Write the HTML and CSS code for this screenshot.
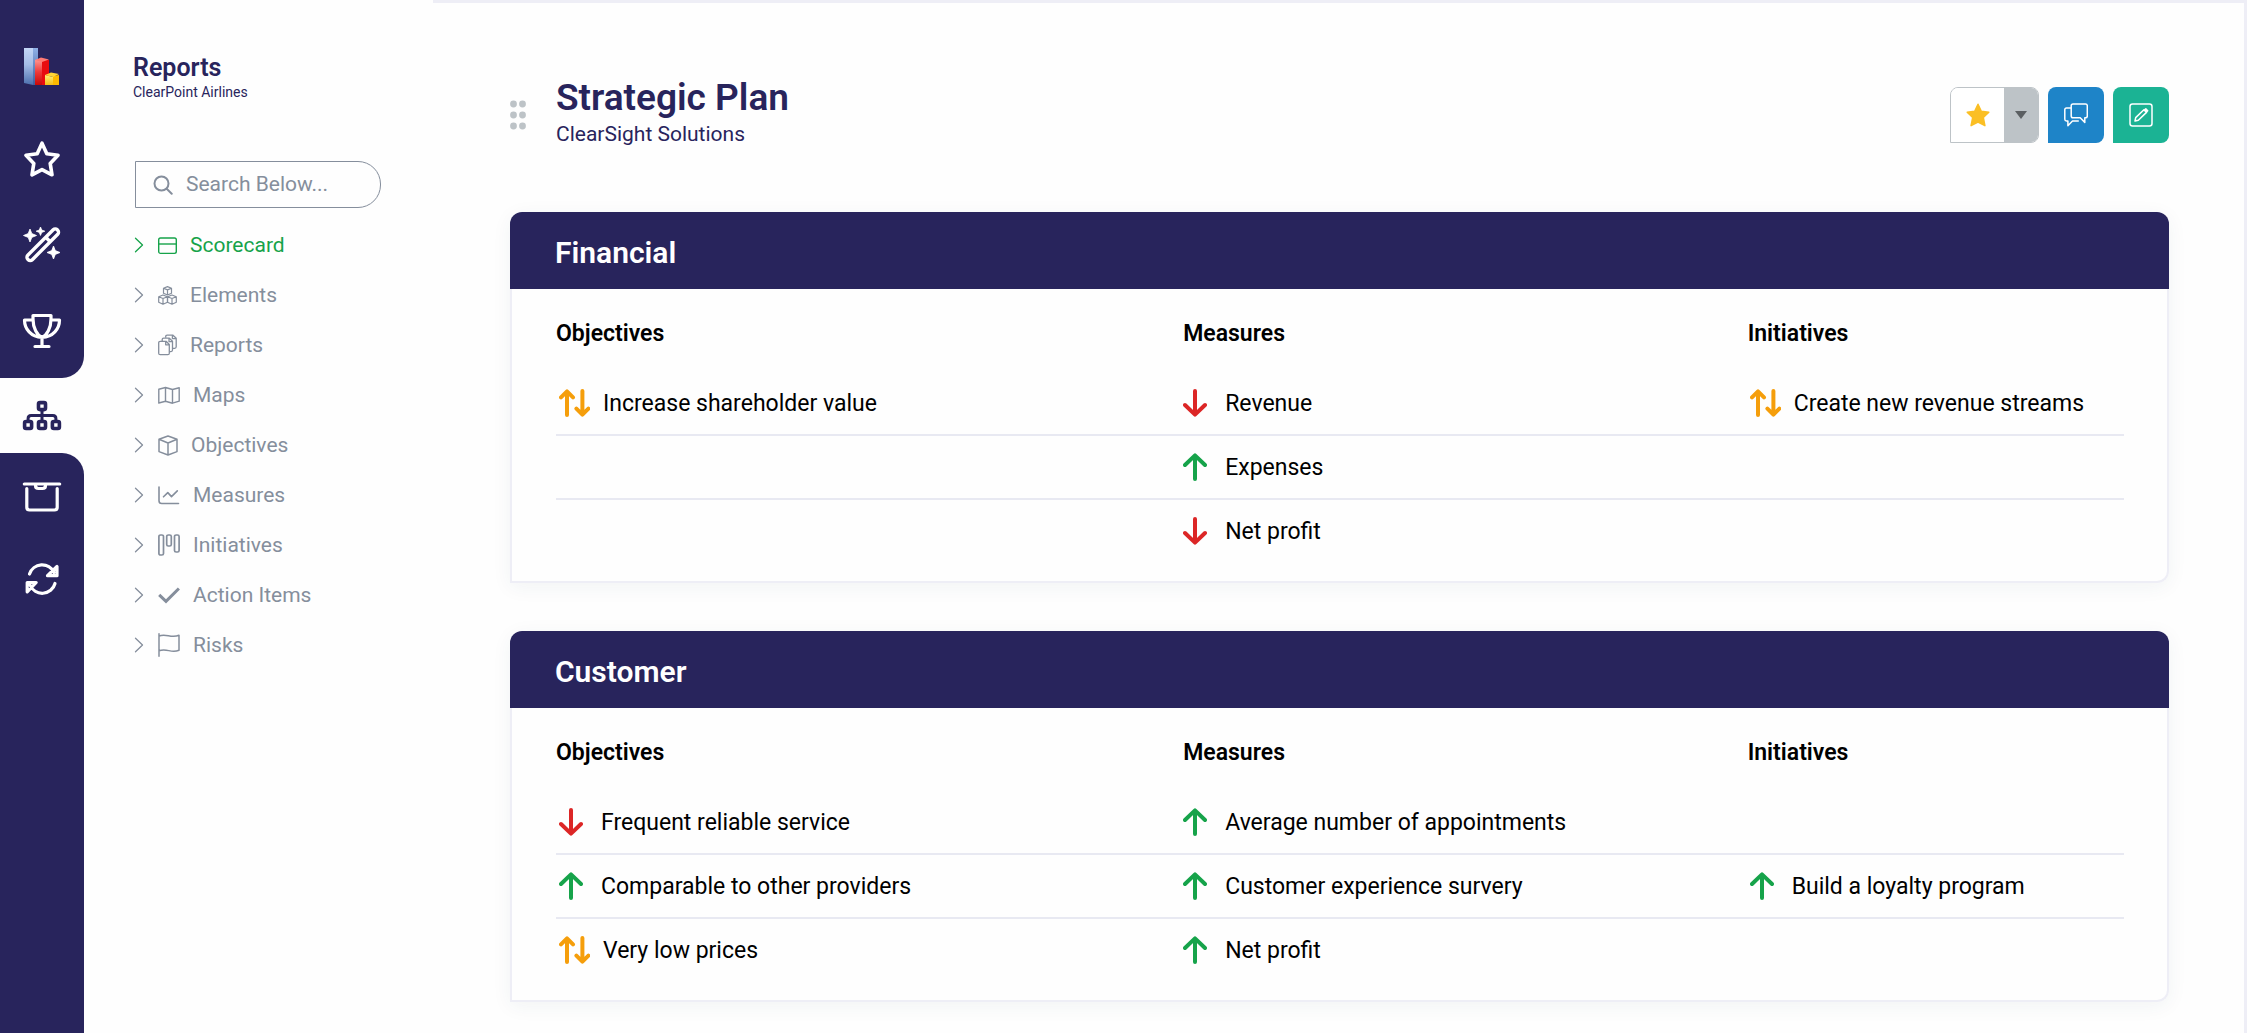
FILE: index.html
```html
<!DOCTYPE html>
<html lang="en">
<head>
    <meta charset="UTF-8">
    <meta name="viewport" content="width=device-width, initial-scale=1.0">
    <title>Strategic Plan - ClearPoint Airlines</title>
    <link rel="stylesheet" href="styles.css">
</head>
<body>
    <!-- Shared icons -->
    <svg class="icon-defs" width="0" height="0" aria-hidden="true">
        <symbol id="chevron" viewBox="0 0 9 16">
            <path d="M1 1.2L8 8l-7 6.8" fill="none" stroke="currentColor" stroke-width="1.3" stroke-linecap="round" stroke-linejoin="round"/>
        </symbol>
        <symbol id="arrow-up" viewBox="0 0 24 28">
            <path d="M12 26V3M2 12L12 2.4 22 12" fill="none" stroke="currentColor" stroke-width="4" stroke-linecap="round" stroke-linejoin="round"/>
        </symbol>
        <symbol id="arrow-down" viewBox="0 0 24 28">
            <path d="M12 2v23M2 16l10 9.6L22 16" fill="none" stroke="currentColor" stroke-width="4" stroke-linecap="round" stroke-linejoin="round"/>
        </symbol>
        <symbol id="arrow-both" viewBox="0 0 31 28">
            <path d="M8 26V3M2 8.4l6-6 6 6M23.400 2v23M17.400 19.600l6 6 6-6" fill="none" stroke="currentColor" stroke-width="4" stroke-linecap="round" stroke-linejoin="round"/>
        </symbol>
    </svg>

    <div class="app">
        <nav class="rail" aria-label="Main">
            <div class="rail-group rail-top">
                <a class="rail-logo" href="#" aria-label="Home">
                    <svg width="38" height="38" viewBox="0 0 38 38">
                        <defs>
                            <linearGradient id="blueFront" x1="0" y1="0" x2="0" y2="1">
                                <stop offset="0" stop-color="#c4d7f6"/>
                                <stop offset="0.450" stop-color="#a5bde6"/>
                                <stop offset="1" stop-color="#4c6fae"/>
                            </linearGradient>
                            <linearGradient id="blueSide" x1="0" y1="0" x2="0" y2="1">
                                <stop offset="0" stop-color="#8fb0e6"/>
                                <stop offset="1" stop-color="#3f5f9f"/>
                            </linearGradient>
                            <linearGradient id="redFront" x1="0" y1="0" x2="0" y2="1">
                                <stop offset="0" stop-color="#ff9a96"/>
                                <stop offset="0.500" stop-color="#ee3a3a"/>
                                <stop offset="1" stop-color="#c80808"/>
                            </linearGradient>
                            <linearGradient id="yellowFront" x1="0" y1="0" x2="0" y2="1">
                                <stop offset="0" stop-color="#fff27a"/>
                                <stop offset="1" stop-color="#f5bd14"/>
                            </linearGradient>
                        </defs>
                        <path d="M1 0h9v37l-9-2z" fill="url(#blueFront)"/>
                        <path d="M10 0h5v37h-5z" fill="url(#blueSide)"/>
                        <path d="M12 12l6-1 2 0v26h-8z" fill="url(#redFront)"/>
                        <path d="M19 12h7v25h-7z" fill="#e80c10"/>
                        <path d="M12 12l6-2.500 8 2-7 2.500z" fill="#ff7a74"/>
                        <path d="M22 27l8 2v8h-8z" fill="url(#yellowFront)"/>
                        <path d="M30 28l6-1v10h-6z" fill="#fdb900"/>
                        <path d="M22 27l6-2.500 8 1.500-6 3z" fill="#ffd535"/>
                    </svg>
                </a>
                <a href="#" aria-label="Favorites">
                    <svg width="40" height="36" viewBox="0 0 40 36" fill="none" stroke="currentColor" stroke-width="3.600" stroke-linejoin="round">
                        <path d="M20 2.200l4.800 10.600 11.200 1.400-7.800 8.200 1.800 11.400-10-5.200-10 5.200 1.800-11.400L4 14.200l11.200-1.400z"/>
                    </svg>
                </a>
                <a href="#" aria-label="Automations">
                    <svg width="40" height="36" viewBox="0 0 40 36">
                        <path d="M5.800 28.200L31.200 2.800a2.900 2.900 0 0 1 4.100 0l.4.400a2.900 2.900 0 0 1 0 4.100L10.300 32.700a2.900 2.900 0 0 1-4.100 0l-.4-.4a2.900 2.900 0 0 1 0-4.100zM24 10.500l4.500 4.500" fill="none" stroke="currentColor" stroke-width="3.400"/>
                        <path d="M8 2l1.800 4.600L14.500 8.500 9.800 10.400 8 15l-1.800-4.600L1.500 8.500l4.700-1.900zM18.500 0l1.200 3 3.100 1.200-3.100 1.200-1.200 3-1.200-3-3.100-1.200 3.100-1.200zM31.500 19l1.800 4.600 4.700 1.900-4.700 1.900-1.800 4.600-1.800-4.600-4.700-1.900 4.700-1.900z" fill="currentColor" stroke="currentColor" stroke-width="0.800"/>
                    </svg>
                </a>
                <a href="#" aria-label="Goals">
                    <svg width="40" height="36" viewBox="0 0 40 36" fill="none" stroke="currentColor" stroke-width="3.200" stroke-linecap="round" stroke-linejoin="round">
                        <path d="M11 2.500h18v3.500c0 9-4 16-9 18.500C15 22 11 15 11 6zM20 24.500v8.500M13 33.500h14M11 7H2.500c0 9 6.500 17 17.500 17.500M29 7h8.500c0 9-6.500 17-17.500 17.500"/>
                    </svg>
                </a>
            </div>

            <a class="rail-active" href="#" aria-label="Scorecard structure" aria-current="page">
                <svg width="40" height="32" viewBox="0 0 40 32" fill="none" stroke="currentColor" stroke-width="3.600" stroke-linejoin="round">
                    <rect x="16.500" y="2.600" width="7" height="7" rx="1.500"/>
                    <rect x="2.600" y="21.500" width="7" height="7" rx="1.500"/>
                    <rect x="16.500" y="21.500" width="7" height="7" rx="1.500"/>
                    <rect x="30.400" y="21.500" width="7" height="7" rx="1.500"/>
                    <path d="M20 10v11M6.100 21v-2.500q0-3 3-3h21.800q3 0 3 3V21" stroke-width="3"/>
                </svg>
            </a>

            <div class="rail-group rail-bottom">
                <a href="#" aria-label="Library">
                    <svg width="40" height="36" viewBox="0 0 40 36" fill="none" stroke="currentColor" stroke-width="3.200" stroke-linecap="round" stroke-linejoin="round">
                        <path d="M2.300 5h35.400M4.800 9.500V28.300q0 2.700 2.700 2.700h25q2.700 0 2.700-2.700V9.500M13.500 5v1.500q0 3 3 3h4q3 0 3-3V5"/>
                    </svg>
                </a>
                <a href="#" aria-label="Sync">
                    <svg width="40" height="36" viewBox="0 0 40 36" fill="none" stroke="currentColor" stroke-width="3.200" stroke-linecap="round" stroke-linejoin="round">
                        <path d="M7.500 13A13.200 13.200 0 0 1 32 11.500M35 5.500v9.200h-9.500zM33 22.500A13.200 13.200 0 0 1 8 24M5.200 30.800v-9.300h9z"/>
                    </svg>
                </a>
            </div>
        </nav>

        <aside class="sidebar">
            <h2 class="sidebar-title">Reports</h2>
            <p class="sidebar-subtitle">ClearPoint Airlines</p>

            <label class="search">
                <svg width="20" height="20" viewBox="0 0 20 20" fill="none" stroke="currentColor" stroke-width="2" stroke-linecap="round">
                    <circle cx="8.500" cy="8.500" r="7"/>
                    <path d="M13.700 13.700l5 5"/>
                </svg>
                <input type="search" placeholder="Search Below..." aria-label="Search reports">
            </label>

            <ul class="tree">
                <li>
                    <a class="selected" href="#">
                        <svg class="chevron"><use href="#chevron"/></svg>
                        <svg width="19" height="24" viewBox="0 0 19 24" fill="none" stroke="currentColor" stroke-width="1.400">
                            <rect x="0.700" y="5" width="17.600" height="15.400" rx="1.800"/>
                            <path d="M.7 11h17.600"/>
                        </svg>
                        <span>Scorecard</span>
                    </a>
                </li>
                <li>
                    <a href="#">
                        <svg class="chevron"><use href="#chevron"/></svg>
                        <svg width="19" height="24" viewBox="0 0 19 24" fill="none" stroke="currentColor" stroke-width="1.200" stroke-linejoin="round">
                            <path d="M9.500 3.600l4 1.600v5L9.500 12l-4-1.800v-5zM5.500 5.200l4 1.700 4-1.700M9.500 6.900V12"/>
                            <path d="M5 12l4.500 1.700v5.500L5 21.200.7 19.200v-5.500zM.7 13.700L5 15.500l4.500-1.800M5 15.500v5.700"/>
                            <path d="M14 12l4.300 1.700v5.500L14 21.200l-4.500-2v-5.500zM9.500 13.700l4.500 1.800 4.300-1.800M14 15.500v5.700"/>
                        </svg>
                        <span>Elements</span>
                    </a>
                </li>
                <li>
                    <a href="#">
                        <svg class="chevron"><use href="#chevron"/></svg>
                        <svg width="19" height="24" viewBox="0 0 19 24" fill="none" stroke="currentColor" stroke-width="1.300" stroke-linejoin="round">
                            <path d="M4.200 8.300H2.200q-1.500 0-1.500 1.500v10.400q0 1.500 1.500 1.500h7.600q1.500 0 1.500-1.500V11.500L8.100 8.300zM7.700 8.500v3.300h3.400"/>
                            <path d="M4.200 8V6.600q0-1.500 1.500-1.500h5.600l3.200 3.200v8.800q0 1.500-1.500 1.500h-1.500M11 5.300v3.300h3.300"/>
                            <path d="M7.700 4.800V3.600q0-1.500 1.500-1.500h5.500l3.500 3.200v8.500q0 1.500-1.500 1.500h-2M14.400 2.300v3.300h3.500"/>
                        </svg>
                        <span>Reports</span>
                    </a>
                </li>
                <li>
                    <a href="#">
                        <svg class="chevron"><use href="#chevron"/></svg>
                        <svg width="22" height="24" viewBox="0 0 22 24" fill="none" stroke="currentColor" stroke-width="1.400" stroke-linejoin="round">
                            <path d="M.8 6.200l6.700-1.700 7 2 6.700-1.800v13.500l-6.700 2-7-1.900-6.700 1.700zM7.500 4.500v13.800M14.500 6.500v13.700"/>
                        </svg>
                        <span>Maps</span>
                    </a>
                </li>
                <li>
                    <a href="#">
                        <svg class="chevron"><use href="#chevron"/></svg>
                        <svg width="20" height="24" viewBox="0 0 20 24" fill="none" stroke="currentColor" stroke-width="1.500" stroke-linejoin="round">
                            <path d="M10 3l9 3.300v12.300L10 22l-9-3.400V6.300zM1 6.300l9 3.700 9-3.700M10 10v12"/>
                        </svg>
                        <span>Objectives</span>
                    </a>
                </li>
                <li>
                    <a href="#">
                        <svg class="chevron"><use href="#chevron"/></svg>
                        <svg width="22" height="24" viewBox="0 0 22 24" fill="none" stroke="currentColor" stroke-width="1.600" stroke-linecap="round" stroke-linejoin="round">
                            <path d="M1 4v13.800q0 2.700 2.700 2.700h16.800M5.500 13.800l4.300-4.200 3.700 4 5.800-5.700"/>
                        </svg>
                        <span>Measures</span>
                    </a>
                </li>
                <li>
                    <a href="#">
                        <svg class="chevron"><use href="#chevron"/></svg>
                        <svg width="22" height="24" viewBox="0 0 22 24" fill="none" stroke="currentColor" stroke-width="1.700">
                            <rect x="0.900" y="2" width="4.600" height="20" rx="1.600"/>
                            <rect x="8.700" y="2" width="4.600" height="11" rx="1.600"/>
                            <rect x="16.500" y="2" width="4.600" height="17" rx="1.600"/>
                        </svg>
                        <span>Initiatives</span>
                    </a>
                </li>
                <li>
                    <a href="#">
                        <svg class="chevron"><use href="#chevron"/></svg>
                        <svg width="22" height="24" viewBox="0 0 22 24" fill="none" stroke="currentColor" stroke-width="3">
                            <path d="M1.200 11.800l6.800 6.600L20.900 5.500"/>
                        </svg>
                        <span>Action Items</span>
                    </a>
                </li>
                <li>
                    <a href="#">
                        <svg class="chevron"><use href="#chevron"/></svg>
                        <svg width="22" height="24" viewBox="0 0 22 24" fill="none" stroke="currentColor" stroke-width="1.500" stroke-linecap="round" stroke-linejoin="round">
                            <path d="M1 .8v22.400M1 3c7-3 12 2.500 20-.8v15c-8 3.500-12-2.500-20 .6"/>
                        </svg>
                        <span>Risks</span>
                    </a>
                </li>
            </ul>
        </aside>

        <main class="content">
            <header class="page-header">
                <svg class="drag-handle" width="16" height="30" viewBox="0 0 16 30" fill="#bdc3c7">
                    <circle cx="3.500" cy="4" r="3.400"/><circle cx="12.500" cy="4" r="3.400"/>
                    <circle cx="3.500" cy="15" r="3.400"/><circle cx="12.500" cy="15" r="3.400"/>
                    <circle cx="3.500" cy="26" r="3.400"/><circle cx="12.500" cy="26" r="3.400"/>
                </svg>
                <div class="page-heading">
                    <h1>Strategic Plan</h1>
                    <p>ClearSight Solutions</p>
                </div>
                <div class="actions">
                    <div class="split-button">
                        <button class="star" type="button" aria-label="Favorite">
                            <svg width="24" height="24" viewBox="0 0 24 24">
                                <path d="M12 1.300l3.300 6.900 7.500 1-5.500 5.300 1.600 8.200-6.900-3.600-6.900 3.600 1.600-8.200L1.200 9.200l7.500-1z" fill="#fbbf24" stroke="#fbbf24" stroke-width="1.500" stroke-linejoin="round"/>
                            </svg>
                        </button>
                        <button class="caret" type="button" aria-label="More options">
                            <svg width="12" height="8" viewBox="0 0 12 8"><path d="M0 0h12L6 8z" fill="#5b5f62"/></svg>
                        </button>
                    </div>
                    <button class="action discuss" type="button" aria-label="Discussion">
                        <svg width="24" height="24" viewBox="0 0 24 24" fill="none" stroke="#fff" stroke-width="1.500" stroke-linejoin="round">
                            <path d="M9 1h12.500q1.800 0 1.800 1.800V13q0 1.800-1.800 1.800h-.7v4.600l-4.600-4.600H9q-1.800 0-1.800-1.800V2.800Q7.200 1 9 1z"/>
                            <path d="M7.200 5H2.500Q.8 5 .8 6.700v9.600q0 1.700 1.700 1.700h1.400v4.800L8.500 18h6.300"/>
                        </svg>
                    </button>
                    <button class="action edit" type="button" aria-label="Edit">
                        <svg width="24" height="24" viewBox="0 0 24 24" fill="none" stroke="#fff" stroke-width="1.500" stroke-linejoin="round">
                            <rect x="1" y="1" width="22" height="22" rx="2.500"/>
                            <path d="M6 18l.7-3.400 8.200-7.800 2.600 2.600-8.200 7.900z"/>
                            <path d="M15.800 6.500l1-.7 1.900 1.900-1 1z" fill="#fff"/>
                        </svg>
                    </button>
                </div>
            </header>

            <section class="card">
                <h2 class="card-title">Financial</h2>
                <div class="card-body">
                    <table>
                        <thead>
                            <tr><th scope="col">Objectives</th><th scope="col">Measures</th><th scope="col">Initiatives</th></tr>
                        </thead>
                        <tbody>
                            <tr>
                                <td><div class="item mixed"><svg><use href="#arrow-both"/></svg><span>Increase shareholder value</span></div></td>
                                <td><div class="item down"><svg><use href="#arrow-down"/></svg><span>Revenue</span></div></td>
                                <td><div class="item mixed"><svg><use href="#arrow-both"/></svg><span>Create new revenue streams</span></div></td>
                            </tr>
                            <tr>
                                <td></td>
                                <td><div class="item up"><svg><use href="#arrow-up"/></svg><span>Expenses</span></div></td>
                                <td></td>
                            </tr>
                            <tr>
                                <td></td>
                                <td><div class="item down"><svg><use href="#arrow-down"/></svg><span>Net profit</span></div></td>
                                <td></td>
                            </tr>
                        </tbody>
                    </table>
                </div>
            </section>

            <section class="card">
                <h2 class="card-title">Customer</h2>
                <div class="card-body">
                    <table>
                        <thead>
                            <tr><th scope="col">Objectives</th><th scope="col">Measures</th><th scope="col">Initiatives</th></tr>
                        </thead>
                        <tbody>
                            <tr>
                                <td><div class="item down"><svg><use href="#arrow-down"/></svg><span>Frequent reliable service</span></div></td>
                                <td><div class="item up"><svg><use href="#arrow-up"/></svg><span>Average number of appointments</span></div></td>
                                <td></td>
                            </tr>
                            <tr>
                                <td><div class="item up"><svg><use href="#arrow-up"/></svg><span>Comparable to other providers</span></div></td>
                                <td><div class="item up"><svg><use href="#arrow-up"/></svg><span>Customer experience survery</span></div></td>
                                <td><div class="item up"><svg><use href="#arrow-up"/></svg><span>Build a loyalty program</span></div></td>
                            </tr>
                            <tr>
                                <td><div class="item mixed"><svg><use href="#arrow-both"/></svg><span>Very low prices</span></div></td>
                                <td><div class="item up"><svg><use href="#arrow-up"/></svg><span>Net profit</span></div></td>
                                <td></td>
                            </tr>
                        </tbody>
                    </table>
                </div>
            </section>
        </main>
    </div>
</body>
</html>
```
FILE: styles.css
```css
:root {
    --navy: #28245c;
    --gray: #858e9c;
    --line: #eeeef6;
    --green: #16a34a;
}

* {
    box-sizing: border-box;
}

body {
    margin: 0;
    background: #fefefe;
    font-family: Roboto, "Liberation Sans", sans-serif;
    color: #000;
}

h1, h2, p, ul {
    margin: 0;
    padding: 0;
}

a {
    color: inherit;
    text-decoration: none;
}

button {
    padding: 0;
    border: 0;
    font: inherit;
    cursor: pointer;
}

svg {
    display: block;
    flex-shrink: 0;
}

.icon-defs {
    position: absolute;
}

.app {
    display: flex;
    min-height: 100vh;
}

/* Icon rail */
.rail {
    display: flex;
    flex-direction: column;
    width: 84px;
    flex-shrink: 0;
}

.rail-group {
    display: flex;
    flex-direction: column;
    align-items: center;
    background: var(--navy);
    color: #fff;
}

.rail-top {
    gap: 50px;
    padding: 48px 0 29px;
    border-bottom-right-radius: 22px;
}

.rail-logo {
    margin-bottom: 5px;
}

.rail-active {
    display: flex;
    align-items: center;
    justify-content: center;
    height: 75px;
    color: var(--navy);
}

.rail-bottom {
    flex: 1;
    gap: 46px;
    padding-top: 26px;
    border-top-right-radius: 22px;
}

/* Sidebar */
.sidebar {
    width: 349px;
    flex-shrink: 0;
    padding: 52px 52px 0 49px;
}

.sidebar-title {
    font-size: 25px;
    font-weight: 600;
    line-height: 32px;
    color: var(--navy);
}

.sidebar-subtitle {
    font-size: 14px;
    line-height: 16px;
    color: var(--navy);
}

.search {
    display: flex;
    align-items: center;
    gap: 13px;
    height: 47px;
    margin: 61px 0 12px 2px;
    padding: 0 17px;
    border: 1px solid var(--gray);
    border-radius: 0 23px 23px 0;
    color: var(--gray);
}

.search input {
    width: 100%;
    min-width: 0;
    padding: 0 0 2px;
    border: 0;
    outline: 0;
    background: none;
    font: 21px/24px Roboto, "Liberation Sans", sans-serif;
    color: inherit;
}

.search input::placeholder {
    color: var(--gray);
    opacity: 1;
}

.tree {
    list-style: none;
    color: var(--gray);
}

.tree a {
    display: flex;
    align-items: center;
    gap: 13px;
    height: 50px;
    font-size: 21px;
    line-height: 24px;
}

.tree .selected {
    color: var(--green);
}

.tree .chevron {
    width: 12px;
    height: 16px;
}

/* Main area */
.content {
    flex: 1;
    min-width: 0;
    padding: 72px 75px 32px 77px;
    border-top: 3px solid var(--line);
    border-right: 3px solid var(--line);
}

.page-header {
    display: flex;
    align-items: center;
    gap: 30px;
    height: 80px;
    margin-bottom: 57px;
}

.page-heading {
    flex: 1;
    padding-bottom: 6px;
    color: var(--navy);
}

.page-heading h1 {
    font-size: 37px;
    font-weight: 600;
    line-height: 44px;
}

.page-heading p {
    font-size: 21px;
    line-height: 28px;
}

.actions {
    display: flex;
    gap: 9px;
}

.split-button {
    display: flex;
    width: 89px;
    height: 56px;
    border: 1px solid #bdc3c7;
    border-radius: 8px 8px 8px 0;
    overflow: hidden;
}

.split-button button {
    display: flex;
    align-items: center;
    justify-content: center;
}

.star {
    flex: 1;
    background: #fff;
}

.caret {
    width: 34px;
    background: #bdc3c7;
}

.action {
    display: flex;
    align-items: center;
    justify-content: center;
    width: 56px;
    height: 56px;
    border-radius: 8px 8px 8px 0;
}

.discuss {
    background: #1e84c8;
}

.edit {
    background: #1bb394;
}

/* Perspective cards */
.card {
    border-radius: 12px 12px 12px 0;
    box-shadow: 0 4px 20px rgba(40, 60, 92, 0.06);
}

.card + .card {
    margin-top: 48px;
}

.card-title {
    padding: 21px 45px 16px;
    border-radius: 12px 12px 0 0;
    background: var(--navy);
    color: #fff;
    font-size: 30px;
    font-weight: 600;
    line-height: 40px;
}

.card-body {
    padding: 0 43px 19px 44px;
    border: 2px solid var(--line);
    border-top: 0;
    border-radius: 0 0 12px 0;
    background: #fefefe;
}

table {
    width: 100%;
    table-layout: fixed;
    border-collapse: separate;
    border-spacing: 0;
}

th {
    width: 24%;
    height: 82px;
    padding: 8px 0 0;
    text-align: left;
    vertical-align: middle;
    font-size: 23px;
    font-weight: 600;
    line-height: 28px;
}

th:first-child {
    width: 40%;
}

th:nth-child(2) {
    width: 36%;
}

td {
    height: 64px;
    padding: 0;
    font-size: 23px;
    line-height: 28px;
}

td:first-child {
    padding-left: 3px;
}

td:last-child {
    padding-left: 2px;
}

tbody tr:first-child td {
    height: 63px;
}

tbody tr + tr td {
    border-top: 2px solid #e8e9f2;
}

.item {
    display: flex;
    align-items: center;
}

.item span {
    padding-top: 2px;
}

.item svg {
    width: 24px;
    height: 28px;
    margin-right: 18px;
}

.item.mixed svg {
    width: 31px;
    margin-right: 13px;
}

.up svg {
    color: var(--green);
}

.down svg {
    color: #dc2626;
}

.mixed svg {
    color: #f59e0b;
}
```
